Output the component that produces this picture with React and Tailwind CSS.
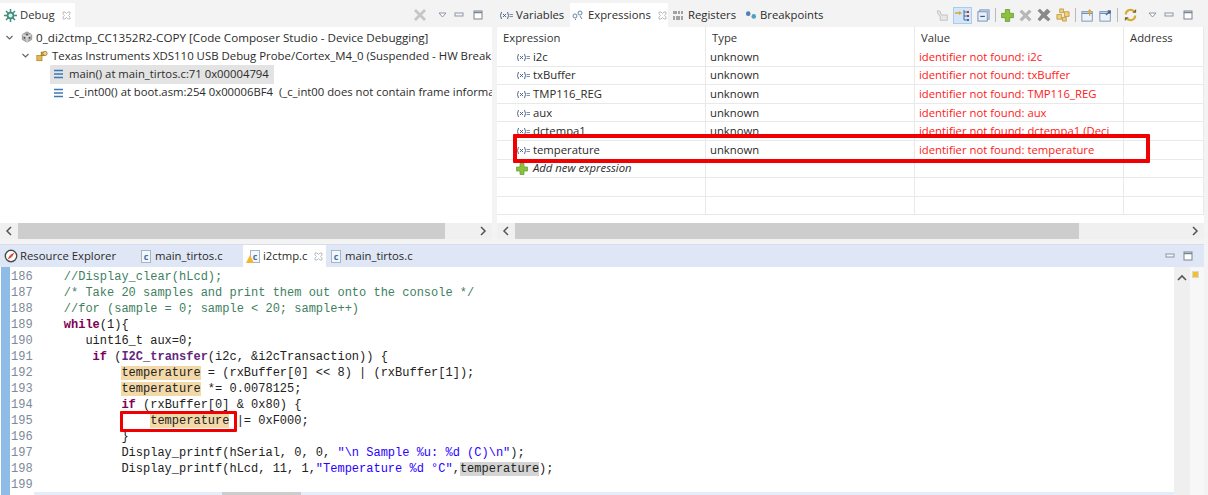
import React from "react";

const ui = { fontFamily: '"Open Sans", "Noto Sans", sans-serif' };

const Close = ({ className = "" }) => (
  <svg width="9" height="9" viewBox="0 0 9 9" className={`shrink-0 ${className}`}>
    <path d="M1 1l2 0 1.500 1.500 1.500-1.500 2 0 0 2-1.500 1.500 1.500 1.500 0 2-2 0-1.500-1.500-1.500 1.500-2 0 0-2 1.500-1.500-1.500-1.500z" fill="none" stroke="#a9adb3" strokeWidth="0.8" />
  </svg>
);

const Plus = ({ size = 12 }) => (
  <svg width={size} height={size} viewBox="0 0 12 12" className="shrink-0">
    <path d="M4 .5h4V4h3.500v4H8v3.500H4V8H.5V4H4z" fill="#8fbf3f" stroke="#5f9a2a" strokeWidth="0.7" />
  </svg>
);

const Vx = () => (
  <svg width="14" height="9" viewBox="0 0 14 9" className="shrink-0">
    <path d="M2.500 1Q.5 4.500 2.500 8M8.500 1Q10.500 4.500 8.500 8M4 3l3 3M7 3L4 6" fill="none" stroke="#44577c" strokeWidth="0.9" />
    <path d="M10.500 3.500H14M10.500 5.500H14" stroke="#6d86a8" strokeWidth="0.9" />
  </svg>
);

const Frame = () => (
  <svg width="11" height="10" viewBox="0 0 11 10" className="shrink-0">
    <path d="M1 1.500h9M1 5h9M1 8.500h9" stroke="#3c79b8" strokeWidth="1.700" />
  </svg>
);

const Chevron = () => (
  <svg width="9" height="9" viewBox="0 0 9 9" className="shrink-0">
    <path d="M1.500 3l3 3 3-3" fill="none" stroke="#666" strokeWidth="1.200" />
  </svg>
);

const ViewMenu = () => (
  <svg width="9" height="7" viewBox="0 0 9 7" className="shrink-0"><path d="M1 1h7L4.500 5z" fill="#fff" stroke="#8d96a3" /></svg>
);
const Min = () => (
  <svg width="11" height="6" viewBox="0 0 11 6" className="shrink-0"><rect x="1" y="1" width="8" height="3" fill="#f4f6fa" stroke="#8d96a3" /></svg>
);
const Max = () => (
  <svg width="10" height="10" viewBox="0 0 10 10" className="shrink-0"><rect x="1" y="1" width="8" height="8" fill="#fff" stroke="#7c8591" /><path d="M1 2.500h8" stroke="#7c8591" strokeWidth="1.500" /></svg>
);
const Arrow = ({ dir }) => (
  <svg width="8" height="10" viewBox="0 0 8 10">
    <path d={dir === "l" ? "M6 1L2 5l4 4" : "M2 1l4 4-4 4"} fill="none" stroke="#555" strokeWidth="1.500" />
  </svg>
);

const ScrollBar = ({ thumbClass }) => (
  <div className="flex h-[16px] items-center bg-[#f0f0f0]">
    <div className="flex w-[18px] shrink-0 justify-center"><Arrow dir="l" /></div>
    <div className="h-full flex-1 min-w-0"><div className={`h-full bg-[#cdcdcd] ${thumbClass}`} /></div>
    <div className="flex w-[18px] shrink-0 justify-center"><Arrow dir="r" /></div>
  </div>
);

const Gear = () => (
  <svg width="13" height="13" viewBox="0 0 13 13" className="shrink-0">
    <circle cx="6.500" cy="6.500" r="3.800" fill="#3f8f80" />
    <path d="M6.500 0v13M0 6.500h13M2 2l9 9M11 2l-9 9" stroke="#3f8f80" strokeWidth="1.500" />
    <circle cx="6.500" cy="6.500" r="2" fill="#dff0ea" />
  </svg>
);

const Cube = () => (
  <svg width="12" height="12" viewBox="0 0 14 14" className="shrink-0">
    <path d="M7 1l5.500 3v6L7 13 1.500 10V4z" fill="#b5b5b5" stroke="#777" strokeWidth="0.7" />
    <path d="M1.500 4L7 7l5.500-3M7 7v6" fill="none" stroke="#eee" strokeWidth="1" />
    <circle cx="7" cy="4" r="1" fill="#444" /><circle cx="4" cy="8" r="1" fill="#444" /><circle cx="10" cy="8" r="1" fill="#444" />
  </svg>
);

const Probe = () => (
  <svg width="12" height="12" viewBox="0 0 14 13" className="shrink-0">
    <rect x="1" y="6" width="6" height="6" fill="#e5b94e" stroke="#a67c1d" strokeWidth="0.8" />
    <rect x="6" y="2" width="4" height="4" fill="#e5a83e" stroke="#8f6a18" strokeWidth="0.8" />
    <circle cx="10.500" cy="3.500" r="2.500" fill="#f3d27a" stroke="#7f6a3a" strokeWidth="0.8" />
  </svg>
);

const CFile = ({ warn }) => (
  <span className="relative inline-flex h-[13px] w-[10px] shrink-0 items-center justify-center border border-[#a9b4c2] bg-[#f4f7fb]">
    <span className="text-[9px] font-bold leading-none text-[#3f6fa8]">c</span>
    {warn && (
      <svg width="8" height="8" viewBox="0 0 8 8" className="absolute -bottom-[1px] -left-[5px]">
        <path d="M4 0l4 8H0z" fill="#f2b632" />
      </svg>
    )}
  </span>
);

const Compass = () => (
  <svg width="14" height="14" viewBox="0 0 14 14" className="shrink-0">
    <circle cx="7" cy="7" r="5.700" fill="#fff" stroke="#4a4a4a" strokeWidth="1.400" />
    <path d="M10.500 3.500L8 8 6 6z" fill="#d9442f" /><path d="M3.500 10.500L6 6l2 2z" fill="#d9442f" />
  </svg>
);

const TOOL_ICONS = [
  <svg key="a" width="14" height="14" viewBox="0 0 16 16" className="-mr-[1px] ml-[4px]"><path d="M3 3l3 1 1 4h7v6H6V10L3 6z" fill="#e8e8e8" stroke="#bdbdbd" /></svg>,
  <span key="b" className="flex h-[17px] w-[19px] items-center justify-center border border-[#a9cdee] bg-[#d4e6f7]">
    <svg width="15" height="13" viewBox="0 0 15 13"><path d="M0 4h5" stroke="#d7a63a" strokeWidth="1.500" /><path d="M4 2l3 2-3 2z" fill="#d7a63a" /><path d="M9 1v10M9 3h3M9 7h3M9 11h3" stroke="#3b6ea8" /><rect x="12" y="2" width="2" height="2" fill="#c0392b" /><rect x="12" y="6" width="2" height="2" fill="#c0392b" /><rect x="12" y="10" width="2" height="2" fill="#3b6ea8" /></svg>
  </span>,
  <svg key="c" width="13" height="13" viewBox="0 0 14 14"><rect x="3" y="1" width="10" height="10" fill="#dbe6f3" stroke="#6f8fb5" /><rect x="1" y="3" width="10" height="10" fill="#e8f0f9" stroke="#6f8fb5" /><path d="M3.500 8h5" stroke="#3b5f8a" strokeWidth="1.300" /></svg>,
  "sep",
  <Plus key="d" size={13} />,
  <svg key="e" width="13" height="13" viewBox="0 0 14 14"><path d="M3 1l4 4 4-4 2 2-4 4 4 4-2 2-4-4-4 4-2-2 4-4-4-4z" fill="#b8b8b8" stroke="#a0a0a0" strokeWidth="0.500" /></svg>,
  <svg key="f" width="14" height="14" viewBox="0 0 15 15"><path d="M3 1l4 4 4-4 3 3-4 4 4 4-2 2-5-4-4 4-2-2 4-5-4-4z" fill="#8a8a8a" stroke="#6c6c6c" strokeWidth="0.500" /></svg>,
  <svg key="g" width="14" height="14" viewBox="0 0 15 15"><path d="M4 1h4v4H4zM9 4h5v5H9zM1 7h5v5H1zM7 10h4v4H7z" fill="#f1d27b" stroke="#b98d2b" strokeWidth="0.800" /></svg>,
  "sep",
  <svg key="h" width="13" height="13" viewBox="0 0 15 15"><rect x="1" y="3" width="12" height="11" fill="#eef3f9" stroke="#6f8fb5" /><path d="M1 5h12" stroke="#6f8fb5" strokeWidth="1.500" /><path d="M10 8V2M8 3.500L10 1l2 2.500" stroke="#d7a63a" fill="none" strokeWidth="1.300" /></svg>,
  <svg key="i" width="13" height="13" viewBox="0 0 15 15"><rect x="1" y="3" width="12" height="11" fill="#eef3f9" stroke="#6f8fb5" /><path d="M1 5h12" stroke="#6f8fb5" strokeWidth="1.500" /><path d="M8 7l5-5M10 2h3v3" stroke="#44618a" fill="none" strokeWidth="1.300" /></svg>,
  "sep",
  <svg key="j" width="15" height="14" viewBox="0 0 16 15"><path d="M3 7a5 5 0 0 1 9-3" fill="none" stroke="#d9a93a" strokeWidth="2.300" /><path d="M13 8a5 5 0 0 1-9 3" fill="none" stroke="#d9a93a" strokeWidth="2.300" /><path d="M10 5h4V1z" fill="#6b6b2a" /><path d="M6 10H2v4z" fill="#6b6b2a" /></svg>,
];

const rows = [
  ["i2c", "identifier not found: i2c"],
  ["txBuffer", "identifier not found: txBuffer"],
  ["TMP116_REG", "identifier not found: TMP116_REG"],
  ["aux", "identifier not found: aux"],
  ["dctempa1", "identifier not found: dctempa1 (Deci"],
  ["temperature", "identifier not found: temperature"],
];

const CELL = "flex items-center overflow-hidden whitespace-nowrap border-r border-[#e9e9e9] px-[4px] pt-[1px]";
const COLS = "grid grid-cols-[209px_209px_209px_1fr]";

const T = ({ c, children }) => <span style={{ color: c }}>{children}</span>;
const KW = "#7f0055";
const CM = "#3f7f5f";
const ST = "#2a00ff";

const code = [
  [186, <T c={CM}>{"    //Display_clear(hLcd);"}</T>],
  [187, <T c={CM}>{"    /* Take 20 samples and print them out onto the console */"}</T>],
  [188, <T c={CM}>{"    //for (sample = 0; sample < 20; sample++)"}</T>],
  [189, <>{"    "}<b style={{ color: KW }}>while</b>{"(1){"}</>],
  [190, "       uint16_t aux=0;"],
  [191, <>{"        "}<b style={{ color: KW }}>if</b>{" ("}<b style={{ color: "#642880" }}>I2C_transfer</b>{"(i2c, &i2cTransaction)) {"}</>],
  [192, <>{"            "}<span className="bg-[#f4d9a8]">temperature</span>{" = (rxBuffer[0] << 8) | (rxBuffer[1]);"}</>],
  [193, <>{"            "}<span className="bg-[#f4d9a8]">temperature</span>{" *= 0.0078125;"}</>],
  [194, <>{"            "}<b style={{ color: KW }}>if</b>{" (rxBuffer[0] & 0x80) {"}</>],
  [195, <>{"                "}<span className="bg-[#f4d9a8]">temperature</span>{" |= 0xF000;"}</>],
  [196, "            }"],
  [197, <>{"            Display_printf(hSerial, 0, 0, "}<T c={ST}>{'"\\n Sample %u: %d (C)\\n"'}</T>{");"}</>],
  [198, <>{"            Display_printf(hLcd, 11, 1,"}<T c={ST}>{'"Temperature %d °C"'}</T>{","}<span className="bg-[#d4d4d4]">temperature</span>{");"}</>],
  [199, ""],
];

export default function App() {
  return (
    <div className="relative flex h-[495px] w-[1208px] flex-col overflow-hidden bg-[#f3f3f3] pt-[3px] pr-[4px] text-[11.300px] text-[#2b2b2b]" style={ui}>
      <div className="flex h-[236px] gap-[5px]">
        {/* Debug */}
        <section className="flex w-[492px] shrink-0 flex-col bg-white">
          <div className="flex h-[24px] items-stretch bg-[#f3f3f3]">
            <div className="flex w-[75px] items-center bg-white pl-[4px] pt-[1px]">
              <Gear /><span className="ml-[3px] text-[#333]">Debug</span><Close className="ml-[7px]" />
            </div>
            <div className="flex flex-1 items-center justify-end pr-[9px]">
              <svg width="14" height="14" viewBox="0 0 14 14" className="mr-[11px]"><path d="M3 1l4 4 4-4 2 2-4 4 4 4-2 2-4-4-4 4-2-2 4-4-4-4z" fill="#c6c6c6" /></svg>
              <ViewMenu /><span className="ml-[7px] flex"><Min /></span><span className="ml-[8px] flex"><Max /></span>
            </div>
          </div>
          <div className="min-h-0 flex-1 overflow-hidden pt-[1px] whitespace-nowrap">
            <div className="flex h-[18.500px] items-center pl-[5px] text-[11.650px]"><Chevron /><span className="ml-[7px] mr-[3px] flex"><Cube /></span>0_di2ctmp_CC1352R2-COPY [Code Composer Studio - Device Debugging]</div>
            <div className="flex h-[18.500px] items-center pl-[21px] text-[11.400px]"><Chevron /><span className="ml-[6px] mr-[4px] flex"><Probe /></span>Texas Instruments XDS110 USB Debug Probe/Cortex_M4_0 (Suspended - HW Break</div>
            <div className="ml-[50px] flex h-[18.500px] w-[224px] items-center bg-[#e3e3e3] pl-[3px]"><span className="mr-[5px] flex"><Frame /></span>main() at main_tirtos.c:71 0x00004794</div>
            <div className="flex h-[18.500px] items-center whitespace-pre pl-[53px]"><span className="mr-[5px] flex"><Frame /></span>_c_int00() at boot.asm:254 0x00006BF4  (_c_int00 does not contain frame informa</div>
          </div>
          <ScrollBar thumbClass="w-[427px]" />
        </section>

        {/* Expressions */}
        <section className="flex min-w-0 flex-1 flex-col bg-white">
          <div className="flex h-[24px] items-stretch whitespace-nowrap bg-[#f3f3f3]">
            <div className="flex w-[73px] items-center gap-[3px] pl-[2px]"><Vx /><span>Variables</span></div>
            <div className="flex w-[98px] items-center gap-[3px] bg-white pl-[2px]">
              <svg width="13" height="11" viewBox="0 0 13 11" className="shrink-0"><path d="M1 6a2 2 0 1 1 4 0 2 2 0 0 1-4 0M6 3a2 2 0 1 1 4 0 2 2 0 0 1-4 0M3 9l1 1M8 6l2 3" fill="none" stroke="#56789b" strokeWidth="0.900" /></svg>
              <span>Expressions</span><Close className="ml-[4px]" />
            </div>
            <div className="ml-[5px] flex items-center gap-[3px] pr-[9px]">
              <svg width="12" height="11" viewBox="0 0 12 11" className="shrink-0"><path d="M1 1v3M3 1v3M6 1v3M9 1v3M1 6v4M4 6v4M6 6v4M9 6v4" stroke="#6d6d6d" strokeWidth="1.200" /></svg>
              <span>Registers</span>
            </div>
            <div className="flex items-center gap-[3px]">
              <svg width="12" height="11" viewBox="0 0 13 11" className="shrink-0"><circle cx="3.500" cy="3.500" r="2.500" fill="#4f7fb5" /><circle cx="9.500" cy="6.500" r="2.500" fill="#4f9fc0" /></svg>
              <span>Breakpoints</span>
            </div>
            <div className="flex flex-1 items-center justify-end gap-[5px] pr-[11px]">
              {TOOL_ICONS.map((icon, i) =>
                icon === "sep" ? <span key={i} className="h-[14px] w-px bg-[#b9b9b9]" /> : <span key={i} className="flex">{icon}</span>
              )}
              <span className="ml-[5px] flex"><ViewMenu /></span>
              <span className="ml-[2px] flex"><Min /></span>
              <span className="ml-[3px] flex"><Max /></span>
            </div>
          </div>
          <div className="min-h-0 flex-1 overflow-hidden">
            <div className={`${COLS} h-[21px]`}>
              {["Expression", "Type", "Value", "Address"].map((h) => (
                <div key={h} className={`${CELL} pl-[6px] text-[#333]`}>{h}</div>
              ))}
            </div>
            {rows.map(([n, v]) => (
              <div key={n} className={`${COLS} h-[18.600px] border-b border-[#e9e9e9]`}>
                <div className={`${CELL} gap-[3px] !pl-[19px]`}><Vx />{n}</div>
                <div className={CELL}>unknown</div>
                <div className={`${CELL} text-[#ff2020]`}>{v}</div>
                <div className={CELL} />
              </div>
            ))}
            <div className={`${COLS} h-[18.600px] border-b border-[#e9e9e9]`}>
              <div className={`${CELL} gap-[5px] !pl-[19px] italic`}><Plus />Add new expression</div>
              <div className={CELL} /><div className={CELL} /><div className={CELL} />
            </div>
            {[0, 1].map((k) => (
              <div key={k} className={`${COLS} h-[18.600px] border-b border-[#e9e9e9]`}>
                <div className={CELL} /><div className={CELL} /><div className={CELL} /><div className={CELL} />
              </div>
            ))}
          </div>
          <ScrollBar thumbClass="w-[564px]" />
        </section>
      </div>

      {/* Editor */}
      <section className="mt-[5px] flex min-h-0 flex-1 flex-col bg-white">
        <div className="flex h-[23px] items-stretch whitespace-nowrap border-t border-[#d5dcec] bg-[#dfe6f5]">
          <div className="flex w-[137px] items-center gap-[2px] pl-[4px]"><Compass />Resource Explorer</div>
          <div className="flex w-[106px] items-center gap-[4px] pl-[4px]"><CFile />main_tirtos.c</div>
          <div className="flex w-[83px] items-center bg-white pl-[7px] pt-[1px]"><CFile warn /><span className="ml-[3px]">i2ctmp.c</span><Close className="ml-[6px]" /></div>
          <div className="flex items-center gap-[4px] pl-[5px]"><CFile />main_tirtos.c</div>
          <div className="flex flex-1 items-center justify-end pr-[11px]"><Min /><span className="ml-[7px] flex"><Max /></span></div>
        </div>
        <div className="flex min-h-0 flex-1">
          <div className="ml-[1px] w-[9px] shrink-0 bg-[#8fbce6]" />
          <div className="flex min-w-0 flex-1 flex-col">
            <pre className="min-h-0 flex-1 overflow-hidden pt-[2px] text-[12px] leading-[16px] text-[#222]" style={{ fontFamily: '"Liberation Mono", monospace' }}>
              {code.map(([n, c]) => (
                <div key={n} className="flex h-[16px]">
                  <span className="ml-[1px] w-[24px] shrink-0 text-[#7c8b99]">{n}</span>
                  <span className="whitespace-pre">{c}</span>
                </div>
              ))}
            </pre>
            <div className="ml-[24px] h-[3px] shrink-0 bg-[#e6edf8]">
              <div className="ml-[188px] h-full w-[79px] bg-[#cdcdcd]" />
            </div>
          </div>
          <div className="flex w-[16px] shrink-0 justify-center bg-[#efefef] pt-[7px]">
            <svg width="10" height="7" viewBox="0 0 10 7"><path d="M1 6l4-4 4 4" fill="none" stroke="#555" strokeWidth="1.600" /></svg>
          </div>
          <div className="flex w-[14px] shrink-0 justify-start bg-[#f7f7f7] pl-[2px] pt-[4px]">
            <span className="h-[7px] w-[7px] border border-[#d8d8d8] bg-[#f5c02c]" />
          </div>
        </div>
      </section>

      <div className="pointer-events-none absolute left-[513px] top-[134px] h-[29px] w-[637px] rounded-[1px] border-[4px] border-[#f00000]" />
      <div className="pointer-events-none absolute left-[120px] top-[411px] h-[21px] w-[117px] rounded-[1px] border-[3px] border-[#f00000]" />
    </div>
  );
}
